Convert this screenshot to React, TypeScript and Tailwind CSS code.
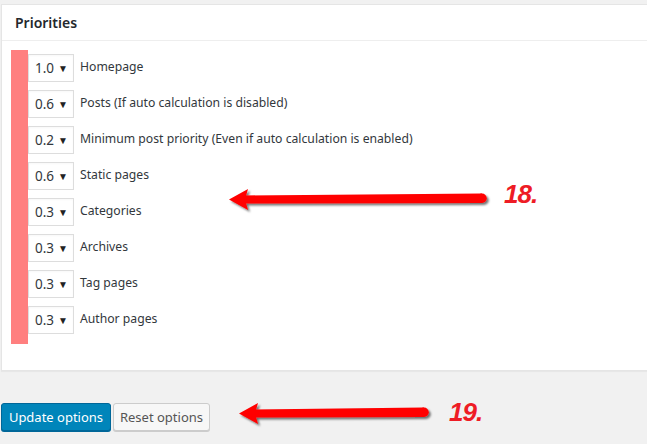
import React from "react"

const ROWS = [
    { value: "1.0", label: "Homepage" },
    { value: "0.6", label: "Posts (If auto calculation is disabled)" },
    { value: "0.2", label: "Minimum post priority (Even if auto calculation is enabled)" },
    { value: "0.6", label: "Static pages" },
    { value: "0.3", label: "Categories" },
    { value: "0.3", label: "Archives" },
    { value: "0.3", label: "Tag pages" },
    { value: "0.3", label: "Author pages" },
]

const Arrow = ({ width }: { width: number }) => (
    <svg width={width + 8} height={26} viewBox={`0 0 ${width + 8} 26`} className="overflow-visible">
        <defs>
            <filter id={`sh${width}`} x="-10%" y="-60%" width="120%" height="220%">
                <feDropShadow dx="2" dy="2" stdDeviation="1.2" floodColor="#000" floodOpacity="0.55" />
            </filter>
        </defs>
        <g filter={`url(#sh${width})`}>
            <path d={`M14 9.5 L${width - 5} 7.5 L${width - 5} 17 L14 17.5 Z`} fill="#ff0000" />
            <circle cx={width - 5} cy={12.25} r={4.75} fill="#ff0000" />
            <path d="M0 13.5 L19 3 L16 13.5 L19 24 Z" fill="#ff0000" />
        </g>
    </svg>
)

export default function App() {
    return (
        <div className="relative w-[647px] h-[444px] overflow-hidden bg-[#f1f1f1] pt-[4px] font-['Noto_Sans',sans-serif] text-[13px] text-[#32373c]">
            <div className="ml-[1px] w-[680px] border border-[#e5e5e5] bg-white shadow-[0_1px_1px_rgba(0,0,0,0.04)]">
                <div className="h-[36px] border-b border-[#eeeeee] pl-[13px] pt-[9px] text-[14px] font-semibold text-[#23282d] leading-[18px]">
                    Priorities
                </div>
                <div className="pl-[9px] pt-[9px] pb-[26px]">
                    <div className="w-[500px] border-l-[17px] border-[#ff7f7f] pt-[4px] pb-[10px] flex flex-col gap-[8px]">
                        {ROWS.map(row => (
                            <div key={row.label} className="flex items-center h-[28px]">
                                <div className="w-[46px] h-[28px] border border-[#dddddd] flex items-center justify-between pl-[6px] pr-[5px] text-[13.5px] text-[#32373c] shadow-[inset_0_1px_2px_rgba(0,0,0,0.03)]">
                                    <span>{row.value}</span>
                                    <span className="text-[10px] text-[#222]">▼</span>
                                </div>
                                <span className="ml-[6px] whitespace-nowrap leading-none text-[12.2px] pb-[2px]">{row.label}</span>
                            </div>
                        ))}
                    </div>
                </div>
            </div>

            <div className="flex gap-[2px] ml-[1px] mt-[32px]">
                <button className="h-[28px] w-[110px] rounded-[3px] border border-[#006799] bg-[#0085ba] text-white text-[13px] shadow-[0_1px_0_#006799] leading-none">
                    Update options
                </button>
                <button className="h-[28px] w-[97px] rounded-[3px] border border-[#cccccc] bg-[#f7f7f7] text-[#555] text-[13px] shadow-[0_1px_0_#ccc] leading-none">
                    Reset options
                </button>
            </div>

            <div className="absolute left-[229px] top-[186px]">
                <Arrow width={258} />
            </div>
            <span className="absolute left-[504px] top-[181px] text-[26px] font-bold italic text-[#ee1c25] font-['Liberation_Sans',sans-serif] leading-none tracking-[-1px]">
                18.
            </span>

            <div className="absolute left-[239px] top-[400px]">
                <Arrow width={190} />
            </div>
            <span className="absolute left-[449px] top-[399px] text-[26px] font-bold italic text-[#ee1c25] font-['Liberation_Sans',sans-serif] leading-none tracking-[-1px]">
                19.
            </span>
        </div>
    )
}
